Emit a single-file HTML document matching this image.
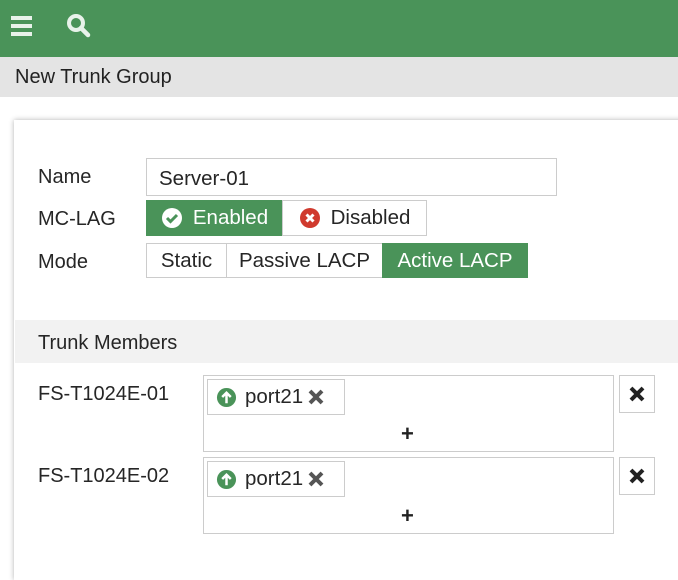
<!DOCTYPE html>
<html><head><style>
*{box-sizing:border-box;margin:0;padding:0}
body{width:678px;height:552px;overflow:hidden;background:#fff;font-family:"Liberation Sans",sans-serif;color:#262626;position:relative}
.a{position:absolute}
.hdr{left:0;top:0;width:678px;height:57px;background:#4a9359}
.bar{left:0;top:57px;width:678px;height:40px;background:#e4e4e4;font-size:20px;padding:9px 0 0 15px;color:#222}
.card{left:14px;top:120px;width:700px;height:460px;background:#fff;box-shadow:0 0 5px rgba(0,0,0,.3)}
.lbl{font-size:20px;color:#262626}
.box{border:1px solid #ccc;background:#fff}
.btn{position:absolute;border:1px solid #ccc;font-size:20.5px;display:flex;align-items:center;justify-content:center;background:#fff}
.g{background:#4a9359;color:#fff;border-color:#4a9359}
</style></head><body>
<div class="a hdr">
<div class="a" style="left:11px;top:16px;width:21px;height:4px;background:#e8f2ea"></div>
<div class="a" style="left:11px;top:24px;width:21px;height:4px;background:#e8f2ea"></div>
<div class="a" style="left:11px;top:32px;width:21px;height:4px;background:#e8f2ea"></div>
<svg class="a" style="left:66px;top:13px" width="28" height="26" viewBox="0 0 28 26"><circle cx="10" cy="10" r="7" fill="none" stroke="#e8f2ea" stroke-width="4"/><line x1="15" y1="15" x2="22" y2="22" stroke="#e8f2ea" stroke-width="4.5" stroke-linecap="round"/></svg>
</div>
<div class="a bar">New Trunk Group</div>
<div class="a card"></div>
<div class="a lbl" style="left:38px;top:166px">Name</div>
<div class="a lbl" style="left:38px;top:208px">MC-LAG</div>
<div class="a lbl" style="left:38px;top:251px">Mode</div>
<div class="a box" style="left:146px;top:158px;width:411px;height:38px;font-size:20.5px;padding:8px 0 0 12px">Server-01</div>
<div class="btn g" style="left:146px;top:200px;width:137px;height:36px"><svg width="22" height="22" viewBox="0 0 22 22" style="margin-right:10px"><circle cx="11" cy="11" r="10" fill="#fff"/><path d="M6 11l3.5 3.5L16 8" fill="none" stroke="#4a9359" stroke-width="3"/></svg>Enabled</div>
<div class="btn" style="left:282px;top:200px;width:145px;height:36px"><svg width="22" height="22" viewBox="0 0 22 22" style="margin-right:10px"><circle cx="11" cy="11" r="10" fill="#d03a2e"/><path d="M7.5 7.5l7 7M14.5 7.5l-7 7" stroke="#fff" stroke-width="3"/></svg>Disabled</div>
<div class="btn" style="left:146px;top:243px;width:81px;height:35px">Static</div>
<div class="btn" style="left:226px;top:243px;width:157px;height:35px">Passive LACP</div>
<div class="btn g" style="left:382px;top:243px;width:146px;height:35px">Active LACP</div>
<div class="a" style="left:15px;top:320px;width:663px;height:43px;background:#f2f2f2"></div>
<div class="a lbl" style="left:38px;top:332px">Trunk Members</div>

<div class="a lbl" style="left:38px;top:383px">FS-T1024E-01</div>
<div class="a box" style="left:203px;top:375px;width:411px;height:77px"></div>
<div class="btn" style="left:207px;top:379px;width:138px;height:36px;justify-content:flex-start;padding-left:8px"><svg width="21" height="21" viewBox="0 0 22 22" style="margin-right:8px"><circle cx="11" cy="11" r="10" fill="#4a9359"/><path d="M11 17V6M6.5 10.5L11 6l4.5 4.5" fill="none" stroke="#fff" stroke-width="2.6"/></svg>port21<svg width="18" height="18" viewBox="0 0 18 18" style="margin-left:4px"><path d="M3 3l12 12M15 3L3 15" stroke="#555" stroke-width="4"/></svg></div>
<div class="a" style="left:401px;top:421px;font-size:22px;font-weight:bold;color:#222">+</div>
<div class="btn" style="left:619px;top:375px;width:36px;height:38px"><svg width="18" height="18" viewBox="0 0 18 18"><path d="M3 3l12 12M15 3L3 15" stroke="#222" stroke-width="4"/></svg></div>

<div class="a lbl" style="left:38px;top:465px">FS-T1024E-02</div>
<div class="a box" style="left:203px;top:457px;width:411px;height:77px"></div>
<div class="btn" style="left:207px;top:461px;width:138px;height:36px;justify-content:flex-start;padding-left:8px"><svg width="21" height="21" viewBox="0 0 22 22" style="margin-right:8px"><circle cx="11" cy="11" r="10" fill="#4a9359"/><path d="M11 17V6M6.5 10.5L11 6l4.5 4.5" fill="none" stroke="#fff" stroke-width="2.6"/></svg>port21<svg width="18" height="18" viewBox="0 0 18 18" style="margin-left:4px"><path d="M3 3l12 12M15 3L3 15" stroke="#555" stroke-width="4"/></svg></div>
<div class="a" style="left:401px;top:503px;font-size:22px;font-weight:bold;color:#222">+</div>
<div class="btn" style="left:619px;top:457px;width:36px;height:38px"><svg width="18" height="18" viewBox="0 0 18 18"><path d="M3 3l12 12M15 3L3 15" stroke="#222" stroke-width="4"/></svg></div>
</body></html>
